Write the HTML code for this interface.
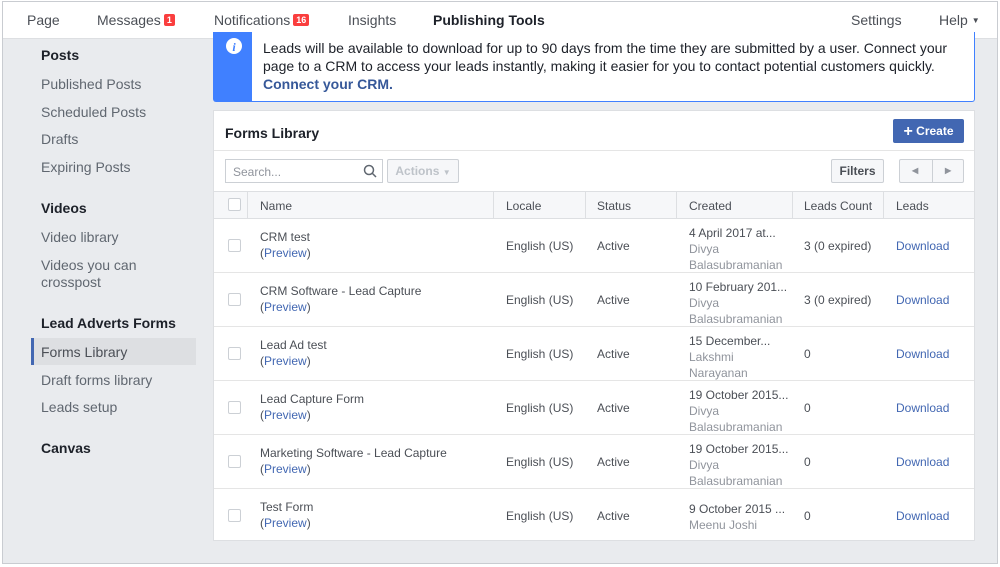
<!DOCTYPE html>
<html><head><style>
*{box-sizing:border-box;margin:0;padding:0}
body{width:1000px;height:567px;background:#fff;font-family:"Liberation Sans",Arial,sans-serif;position:relative;overflow:hidden;color:#1d2129}
.frame{position:absolute;left:2px;top:1px;width:996px;height:563px;background:#e9ebee;border:1px solid #c9ccd1;overflow:hidden}
.a{position:absolute;white-space:nowrap}
.nav{position:absolute;left:0;top:0;width:996px;height:37px;background:#fff;border-bottom:1px solid #dddfe2}
.nav .a{font-size:14px;color:#4b4f56;top:10px}
.badge{display:inline-block;background:#fa3e3e;color:#fff;font-size:9px;font-weight:bold;padding:1px 3px;border-radius:2px;vertical-align:2px;margin-left:3px}
.side .a{font-size:14px;color:#606770;left:38px}
.side .h{font-weight:bold;color:#1d2129}
.info{position:absolute;left:210px;top:30px;width:762px;height:70px;background:#fff;border:1px solid #4080ff;border-top:none;border-radius:0 0 3px 3px}
.info .strip{position:absolute;left:0;top:0;width:38px;height:100%;background:#4080ff}
.card{position:absolute;left:210px;top:108px;width:762px;height:431px;background:#fff;border:1px solid #dddfe2}
.th{position:absolute;top:80px;left:0;width:760px;height:28px;background:#f6f7f9;border-top:1px solid #dddfe2;border-bottom:1px solid #dddfe2}
.th .a{font-size:12px;color:#4b4f56;top:7px}
.vd{position:absolute;top:0;width:1px;height:27px;background:#dddfe2}
.cb{position:absolute;width:13px;height:13px;border:1px solid #ccd0d5;border-radius:2px;background:#fff;left:14px}
.row{position:absolute;left:0;width:760px;height:54px;border-bottom:1px solid #e5e5e5}
.row .a{font-size:12px;color:#4b4f56}
.g{color:#90949c!important}
.lk{color:#4267b2!important}
.btn{position:absolute;border:1px solid #ccd0d5;border-radius:2px;background:#f6f7f9;font-size:12px;font-weight:bold;color:#4b4f56;text-align:center}
</style></head><body>
<div class="frame">
<div class="nav">
<span class="a" style="left:24px">Page</span>
<span class="a" style="left:94px">Messages<span class="badge">1</span></span>
<span class="a" style="left:211px">Notifications<span class="badge">16</span></span>
<span class="a" style="left:345px">Insights</span>
<span class="a" style="left:430px;color:#1d2129;font-weight:bold">Publishing Tools</span>
<div style="position:absolute;left:419px;top:34px;width:135px;height:3px;background:#4267b2"></div>
<span class="a" style="left:848px">Settings</span>
<span class="a" style="left:936px">Help <span style="font-size:8px;vertical-align:2px">▼</span></span>
</div>
<div class="side">
<span class="a h" style="top:45px">Posts</span>
<span class="a" style="top:74px">Published Posts</span>
<span class="a" style="top:102px">Scheduled Posts</span>
<span class="a" style="top:129px">Drafts</span>
<span class="a" style="top:157px">Expiring Posts</span>
<span class="a h" style="top:198px">Videos</span>
<span class="a" style="top:227px">Video library</span>
<span class="a" style="top:255px">Videos you can</span>
<span class="a" style="top:272px">crosspost</span>
<span class="a h" style="top:313px">Lead Adverts Forms</span>
<div style="position:absolute;left:28px;top:336px;width:165px;height:27px;background:#dddfe2;border-left:3px solid #4267b2"></div>
<span class="a" style="top:342px;color:#4b4f56">Forms Library</span>
<span class="a" style="top:370px">Draft forms library</span>
<span class="a" style="top:397px">Leads setup</span>
<span class="a h" style="top:438px">Canvas</span>
</div>
<div class="info"><div class="strip"><svg width="16" height="16" style="position:absolute;left:12px;top:6px"><circle cx="8" cy="8" r="8" fill="#fff"/><text x="8" y="13" font-size="12" font-weight="bold" font-style="italic" fill="#4080ff" text-anchor="middle" font-family="Liberation Serif">i</text></svg></div>
<div style="position:absolute;left:49px;top:7px;font-size:14px;line-height:18px;color:#1d2129">Leads will be available to download for up to 90 days from the time they are submitted by a user. Connect your<br>page to a CRM to access your leads instantly, making it easier for you to contact potential customers quickly.<br><b style="color:#365899">Connect your CRM.</b></div></div>
<div class="card">
<span class="a" style="left:11px;top:14px;font-size:14px;font-weight:bold">Forms Library</span>
<div style="position:absolute;left:679px;top:8px;width:71px;height:24px;background:#4267b2;border-radius:2px;color:#fff;font-size:12px;font-weight:bold;text-align:center;line-height:24px"><span style="font-size:16px;vertical-align:-1px">+</span> Create</div>
<div style="position:absolute;left:0;top:39px;width:760px;height:1px;background:#e5e5e5"></div>
<div style="position:absolute;left:11px;top:48px;width:158px;height:24px;border:1px solid #ccd0d5;font-size:12px;color:#90949c;padding:5px 7px">Search...
<svg width="14" height="14" style="position:absolute;right:5px;top:4px"><circle cx="6" cy="6" r="4.5" fill="none" stroke="#606770" stroke-width="1.5"/><path d="M9.5 9.5L13 13" stroke="#606770" stroke-width="1.5"/></svg></div>
<div class="btn" style="left:173px;top:48px;width:72px;height:24px;line-height:22px;color:#bec3c9">Actions <span style="font-size:8px">▼</span></div>
<div class="btn" style="left:617px;top:48px;width:53px;height:24px;line-height:22px">Filters</div>
<div class="btn" style="left:685px;top:48px;width:65px;height:24px;line-height:22px;font-size:8px;color:#90949c"><span style="position:absolute;left:12px">◀</span><span style="position:absolute;left:32px;top:0;width:1px;height:22px;background:#ccd0d5"></span><span style="position:absolute;left:45px">▶</span></div>
<div class="th"><div class="cb" style="top:6px"></div>
<div class="vd" style="left:33px"></div><span class="a" style="left:46px">Name</span>
<div class="vd" style="left:279px"></div><span class="a" style="left:292px">Locale</span>
<div class="vd" style="left:371px"></div><span class="a" style="left:383px">Status</span>
<div class="vd" style="left:462px"></div><span class="a" style="left:475px">Created</span>
<div class="vd" style="left:578px"></div><span class="a" style="left:590px">Leads Count</span>
<div class="vd" style="left:669px"></div><span class="a" style="left:682px">Leads</span></div>

<div class="row" style="top:108px"><div class="cb" style="top:20px"></div><span class="a" style="left:46px;top:11px">CRM test</span><span class="a" style="left:46px;top:27px">(<span class="lk">Preview</span>)</span><span class="a" style="left:292px;top:20px">English (US)</span><span class="a" style="left:383px;top:20px">Active</span><span class="a" style="left:475px;top:7px">4 April 2017 at...</span><span class="a g" style="left:475px;top:23px">Divya</span><span class="a g" style="left:475px;top:39px">Balasubramanian</span><span class="a" style="left:590px;top:20px">3 (0 expired)</span><span class="a lk" style="left:682px;top:20px">Download</span></div>
<div class="row" style="top:162px"><div class="cb" style="top:20px"></div><span class="a" style="left:46px;top:11px">CRM Software - Lead Capture</span><span class="a" style="left:46px;top:27px">(<span class="lk">Preview</span>)</span><span class="a" style="left:292px;top:20px">English (US)</span><span class="a" style="left:383px;top:20px">Active</span><span class="a" style="left:475px;top:7px">10 February 201...</span><span class="a g" style="left:475px;top:23px">Divya</span><span class="a g" style="left:475px;top:39px">Balasubramanian</span><span class="a" style="left:590px;top:20px">3 (0 expired)</span><span class="a lk" style="left:682px;top:20px">Download</span></div>
<div class="row" style="top:216px"><div class="cb" style="top:20px"></div><span class="a" style="left:46px;top:11px">Lead Ad test</span><span class="a" style="left:46px;top:27px">(<span class="lk">Preview</span>)</span><span class="a" style="left:292px;top:20px">English (US)</span><span class="a" style="left:383px;top:20px">Active</span><span class="a" style="left:475px;top:7px">15 December...</span><span class="a g" style="left:475px;top:23px">Lakshmi</span><span class="a g" style="left:475px;top:39px">Narayanan</span><span class="a" style="left:590px;top:20px">0</span><span class="a lk" style="left:682px;top:20px">Download</span></div>
<div class="row" style="top:270px"><div class="cb" style="top:20px"></div><span class="a" style="left:46px;top:11px">Lead Capture Form</span><span class="a" style="left:46px;top:27px">(<span class="lk">Preview</span>)</span><span class="a" style="left:292px;top:20px">English (US)</span><span class="a" style="left:383px;top:20px">Active</span><span class="a" style="left:475px;top:7px">19 October 2015...</span><span class="a g" style="left:475px;top:23px">Divya</span><span class="a g" style="left:475px;top:39px">Balasubramanian</span><span class="a" style="left:590px;top:20px">0</span><span class="a lk" style="left:682px;top:20px">Download</span></div>
<div class="row" style="top:324px"><div class="cb" style="top:20px"></div><span class="a" style="left:46px;top:11px">Marketing Software - Lead Capture</span><span class="a" style="left:46px;top:27px">(<span class="lk">Preview</span>)</span><span class="a" style="left:292px;top:20px">English (US)</span><span class="a" style="left:383px;top:20px">Active</span><span class="a" style="left:475px;top:7px">19 October 2015...</span><span class="a g" style="left:475px;top:23px">Divya</span><span class="a g" style="left:475px;top:39px">Balasubramanian</span><span class="a" style="left:590px;top:20px">0</span><span class="a lk" style="left:682px;top:20px">Download</span></div>
<div class="row" style="top:378px;border-bottom:none"><div class="cb" style="top:20px"></div><span class="a" style="left:46px;top:11px">Test Form</span><span class="a" style="left:46px;top:27px">(<span class="lk">Preview</span>)</span><span class="a" style="left:292px;top:20px">English (US)</span><span class="a" style="left:383px;top:20px">Active</span><span class="a" style="left:475px;top:13px">9 October 2015 ...</span><span class="a g" style="left:475px;top:29px">Meenu Joshi</span><span class="a" style="left:590px;top:20px">0</span><span class="a lk" style="left:682px;top:20px">Download</span></div>
</div>
</div>
</body></html>
